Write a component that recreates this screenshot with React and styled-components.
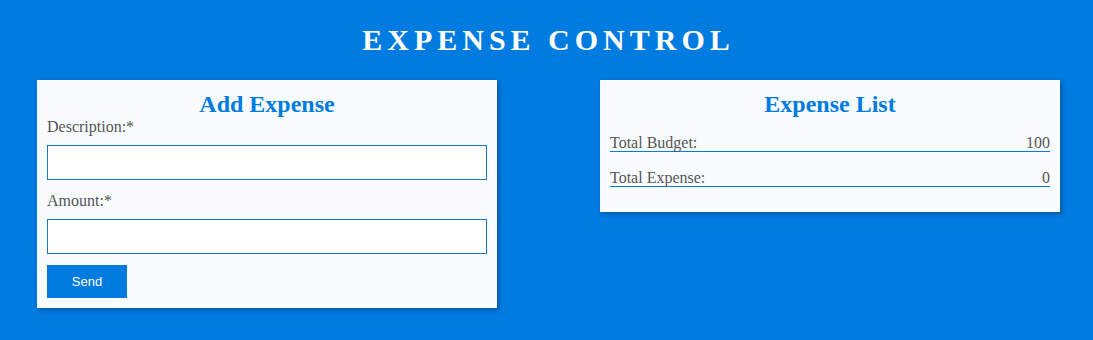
import React from 'react';
import styled, { createGlobalStyle } from 'styled-components';

const Global = createGlobalStyle`
  html, body {
    margin     : 0;
    padding    : 0;
    background : #007bdf;
  }
  body {
    font-family : "Liberation Serif", "Times New Roman", serif;
  }
`;

const Page = styled.div`
  min-height : 340px;
  padding    : 22px 33px 0 37px;
  box-sizing : border-box;
`;

const Title = styled.h1`
  margin         : 0 0 22px;
  text-align     : center;
  color          : #fff;
  font-size      : 30px;
  font-weight    : bold;
  letter-spacing : 5px;
  line-height    : 36px;
`;

const Columns = styled.div`
  display               : grid;
  grid-template-columns : 460px 460px;
  justify-content       : space-between;
  align-items           : start;
`;

const Card = styled.section`
  display        : flex;
  flex-direction : column;
  padding        : 10px;
  background     : #f8fcff;
  box-shadow     : 2px 2px 4px rgba(0, 40, 90, 0.45);
`;

const Heading = styled.h2`
  margin      : 0;
  text-align  : center;
  color       : #007bdf;
  font-size   : 24px;
  line-height : 28px;
  font-weight : bold;
`;

const Label = styled.label`
  color         : #555;
  font-size     : 16px;
  line-height   : 18px;
  margin-bottom : 9px;
`;

const Input = styled.input`
  height        : 35px;
  box-sizing    : border-box;
  border        : 1px solid #1a74cc;
  background    : #fff;
  margin-bottom : 12px;
  outline       : none;
`;

const Button = styled.button`
  width       : 80px;
  height      : 33px;
  margin-top  : -1px;
  border      : none;
  background  : #007bdf;
  color       : #fff;
  font-family : "Liberation Sans", Arial, sans-serif;
  font-size   : 13px;
  cursor      : pointer;
`;

const TotalRow = styled.div`
  display         : flex;
  justify-content : space-between;
  margin-top      : 17px;
  color           : #555;
  font-size       : 16px;
  line-height     : 17px;
  border-bottom   : 1px solid #007bdf;
  &:first-of-type { margin-top : 16px; }
`;

const Spacer = styled.div`
  height : 15px;
`;

const App = () => (
  <Page>
    <Global />
    <Title>EXPENSE CONTROL</Title>
    <Columns>
      <Card>
        <Heading>Add Expense</Heading>
        <Label>Description:*</Label>
        <Input type="text" />
        <Label>Amount:*</Label>
        <Input type="number" />
        <Button type="button">Send</Button>
      </Card>
      <Card>
        <Heading>Expense List</Heading>
        <TotalRow>
          <span>Total Budget:</span>
          <span>100</span>
        </TotalRow>
        <TotalRow>
          <span>Total Expense:</span>
          <span>0</span>
        </TotalRow>
        <Spacer />
      </Card>
    </Columns>
  </Page>
);

export default App;
